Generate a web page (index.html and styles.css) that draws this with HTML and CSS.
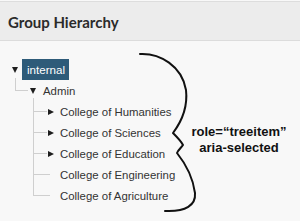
FILE: index.html
```html
<!DOCTYPE html>
<html>
<head>
<meta charset="utf-8">
<link rel="stylesheet" href="styles.css">
</head>
<body>
<div class="panel">
  <div class="header"><h1 class="title">Group Hierarchy</h1></div>
  <div class="tree">
    <ul class="level level0" role="tree">
      <li class="item">
        <div class="row"><span class="twisty open"></span><span class="label selected">internal</span></div>
        <ul class="level level1">
          <li class="item">
            <div class="row"><span class="twisty open"></span><span class="label">Admin</span></div>
            <ul class="level level2">
              <li class="item child"><div class="row"><span class="twisty closed"></span><span class="label">College of Humanities</span></div></li>
              <li class="item child"><div class="row"><span class="twisty closed"></span><span class="label">College of Sciences</span></div></li>
              <li class="item child"><div class="row"><span class="twisty closed"></span><span class="label">College of Education</span></div></li>
              <li class="item child leaf"><div class="row"><span class="twisty"></span><span class="label">College of Engineering</span></div></li>
              <li class="item child leaf"><div class="row"><span class="twisty"></span><span class="label">College of Agriculture</span></div></li>
            </ul>
          </li>
        </ul>
      </li>
    </ul>
    <svg class="brace" width="300" height="221" viewBox="0 0 300 221">
      <path d="M140,54 C160,53 182,66 186,90 C188,108 182,121 173,133 C177,137 181,141 183,145 C181,148 178,150 177,153 C185,163 193,178 195,193 C196,205 186,212 165,211" fill="none" stroke="#111" stroke-width="2" stroke-linecap="round" stroke-linejoin="round"/>
    </svg>
    <div class="note">
      <div class="note-line">role=“treeitem”</div>
      <div class="note-line">aria-selected</div>
    </div>
  </div>
</div>
</body>
</html>
```

FILE: styles.css
```css
html, body {
  margin: 0;
  padding: 0;
  background: #f8f8f8;
}
body {
  width: 300px;
  height: 221px;
  overflow: hidden;
  font-family: "Liberation Sans", Arial, sans-serif;
}
.panel {
  position: relative;
  height: 221px;
  padding-top: 1px;
  box-sizing: border-box;
  background: #f8f8f8;
}
.header {
  height: 38px;
  background: #ececec;
  border-top: 1px solid #dddddd;
  border-bottom: 1px solid #dcdcdc;
  display: flex;
  align-items: center;
  padding-left: 8px;
}
.title {
  margin: 0;
  font-family: Lato, "Open Sans", sans-serif;
  font-weight: 700;
  font-size: 15px;
  color: #2b2b2b;
  line-height: 1;
  position: relative;
  top: 1px;
}
.tree {
  padding: 18px 0 0 9px;
}
.level {
  list-style: none;
  margin: 0;
  padding: 0;
}
.level1 {
  padding-left: 18px;
}
.level2 {
  padding-left: 17px;
}
.item {
  position: relative;
}
.row {
  height: 21px;
  display: flex;
  align-items: center;
  font-size: 11.4px;
  color: #333;
}
.twisty {
  width: 12px;
  height: 21px;
  flex: none;
  display: flex;
  align-items: center;
  justify-content: center;
}
.twisty.open::before {
  content: "";
  border-left: 3.5px solid transparent;
  border-right: 3.5px solid transparent;
  border-top: 6px solid #1e1e1e;
}
.twisty.closed::before {
  content: "";
  border-top: 3.5px solid transparent;
  border-bottom: 3.5px solid transparent;
  border-left: 6px solid #1e1e1e;
  margin-left: 1px;
}
.label {
  margin-left: 4px;
  white-space: nowrap;
}
.label.selected {
  margin-left: 1px;
  background: #2e5b79;
  color: #ffffff;
  height: 21px;
  line-height: 21px;
  padding: 0 4px 0 5px;
  font-size: 11.6px;
}
.level1 > .item::before {
  content: "";
  position: absolute;
  left: -12px;
  top: -2px;
  width: 12px;
  height: 12px;
  border-left: 1px solid #cfcfcf;
  border-bottom: 1px solid #cfcfcf;
}
.child::before {
  content: "";
  position: absolute;
  left: -11px;
  top: -11px;
  width: 13px;
  height: 21px;
  border-left: 1px solid #cfcfcf;
  border-bottom: 1px solid #cfcfcf;
}
.child:first-child::before {
  top: -3px;
  height: 13px;
}
.child.leaf::before {
  width: 16px;
}
.brace {
  position: absolute;
  left: 0;
  top: 0;
  pointer-events: none;
}
.note {
  position: absolute;
  left: 186px;
  top: 124px;
  width: 106px;
  text-align: center;
  font-family: "Liberation Sans", Arial, sans-serif;
  font-weight: 700;
  font-size: 13px;
  line-height: 16px;
  color: #111;
}
```
